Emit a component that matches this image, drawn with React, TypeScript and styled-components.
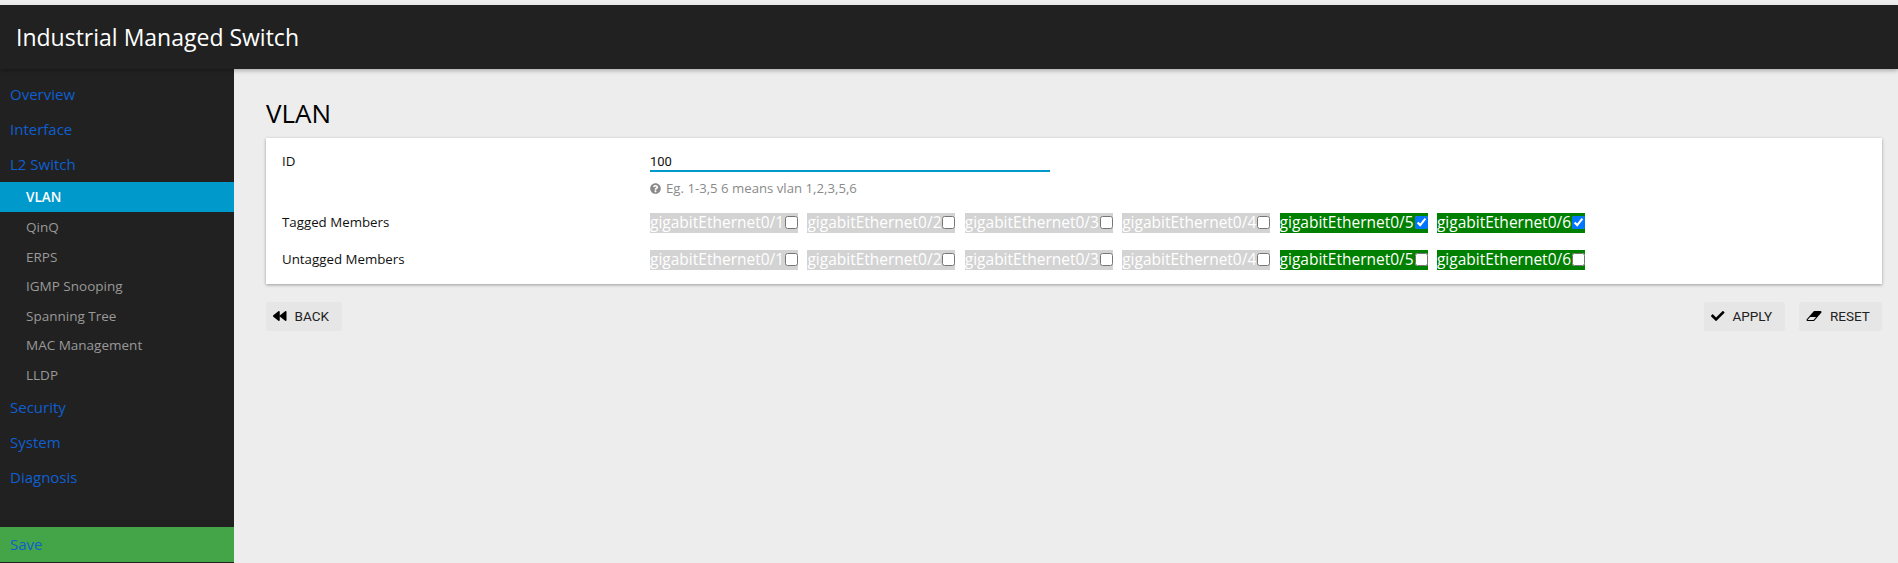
import React from "react";
import styled, { createGlobalStyle } from "styled-components";
import { FaBackward, FaCheck, FaQuestionCircle } from "react-icons/fa";

const UI = `"Open Sans", "Noto Sans", sans-serif`;
const ALT = `Roboto, "Liberation Sans", sans-serif`;

const Global = createGlobalStyle`
  html, body { margin: 0; padding: 0; background: #fff; }
  body { font-family: ${UI}; }
  * { box-sizing: border-box; }
`;

const Page = styled.div`
  width: 1898px;
  height: 563px;
  padding-top: 5px;
  display: flex;
  flex-direction: column;
  overflow: hidden;
  background: #ededed;
`;
const Header = styled.header`
  height: 64px;
  flex: none;
  background: #212121;
  color: #fff;
  display: flex;
  align-items: center;
  padding-left: 16px;
  font-size: 23px;
  font-weight: 500;
  letter-spacing: 0;
  box-shadow: 0 2px 4px rgba(0,0,0,.25);
  position: relative;
  z-index: 1;
`;
const Body = styled.div`
  flex: 1;
  display: flex;
  min-height: 0;
`;
const Sidebar = styled.nav`
  width: 234px;
  flex: none;
  background: #212121;
  display: flex;
  flex-direction: column;
  padding-top: 7.5px;
`;
const TopItem = styled.div`
  height: 35.3px;
  line-height: 34px;
  padding-left: 10px;
  font-size: 15px;
  color: #0f5fd0;
`;
const SubItem = styled.div<{ $active?: boolean }>`
  height: 29.6px;
  line-height: 30px;
  padding-left: 26px;
  font-size: 13.5px;
  color: ${(p) => (p.$active ? "#fff" : "#999")};
  background: ${(p) => (p.$active ? "#0099cc" : "transparent")};
  font-weight: ${(p) => (p.$active ? 600 : 400)};
`;
const Spacer = styled.div`flex: 1;`;
const SaveItem = styled(TopItem)`
  height: 35px;
  background: #43a547;
  margin-bottom: 1px;
`;
const Main = styled.main`
  flex: 1;
  padding: 29px 16px 0 32px;
  min-width: 0;
`;
const Title = styled.h2`
  margin: 0 0 7px;
  height: 33px;
  line-height: 30px;
  font-size: 26px;
  font-weight: 400;
  color: #000;
`;
const Card = styled.section`
  background: #fff;
  height: 146px;
  padding: 14px 16px 0;
  box-shadow: 0 1px 3px rgba(0,0,0,.35);
`;
const Row = styled.div<{ $h: number }>`
  display: flex;
  height: ${(p) => p.$h}px;
`;
const Label = styled.div`
  width: 368px;
  flex: none;
  font-size: 13.3px;
  line-height: 18px;
  color: #111;
`;
const Field = styled.div`
  width: 400px;
`;
const InputBox = styled.div`
  height: 20px;
  line-height: 19px;
  font-family: ${ALT};
  font-size: 13px;
  color: #111;
  border-bottom: 2px solid #0099cc;
`;
const Hint = styled.div`
  margin-top: 8px;
  display: flex;
  align-items: center;
  gap: 5px;
  font-size: 13.2px;
  color: #8a8a8a;
  line-height: 16px;
  svg { flex: none; }
`;
const Members = styled.div`
  display: flex;
  gap: 9.4px;
`;
const Chip = styled.label<{ $on?: boolean }>`
  width: 148px;
  height: 20px;
  display: flex;
  justify-content: space-between;
  background: ${(p) => (p.$on ? "#008000" : "#d3d3d3")};
  color: #fff;
  font-size: 15.5px;
  line-height: 19px;
  white-space: nowrap;
`;
const Check = styled.input`
  margin: 3px 0 0;
  width: 13px;
  height: 13px;
  flex: none;
`;
const Actions = styled.div`
  display: flex;
  justify-content: space-between;
  margin-top: 18px;
`;
const Group = styled.div`
  display: flex;
  gap: 14px;
`;
const Btn = styled.button<{ $w: number }>`
  width: ${(p) => p.$w}px;
  height: 29px;
  border: 0;
  border-radius: 2px;
  background: #e6e6e6;
  color: #222;
  font-family: ${ALT};
  font-size: 13.5px;
  display: flex;
  align-items: center;
  gap: 8px;
  padding: 0 0 2px 7px;
  svg { height: 14px; color: #000; flex: none; }
`;

const Eraser = () => (
  <svg width="16" viewBox="0 0 2048 1792" fill="currentColor" aria-hidden="true">
    <path d="M960 1408l336-384h-768l-336 384h768zm1013-1077q15 34 9.5 71.5t-30.5 65.5l-896 1024q-38 44-96 44h-768q-38 0-69.5-20.5t-47.5-54.5q-15-34-9.5-71.5t30.5-65.5l896-1024q38-44 96-44h768q38 0 70 20.5t47 54.5z" />
  </svg>
);

const ports = [1, 2, 3, 4, 5, 6];
const MemberRow = ({ tagged }: { tagged: boolean }) => (
  <Members>
    {ports.map((n) => (
      <Chip key={n} $on={n > 4}>
        gigabitEthernet0/{n}
        <Check type="checkbox" readOnly checked={tagged && n > 4} />
      </Chip>
    ))}
  </Members>
);

export default function App() {
  return (
    <Page>
      <Global />
      <Header>Industrial Managed Switch</Header>
      <Body>
        <Sidebar>
          <TopItem>Overview</TopItem>
          <TopItem>Interface</TopItem>
          <TopItem>L2 Switch</TopItem>
          <SubItem $active>VLAN</SubItem>
          <SubItem>QinQ</SubItem>
          <SubItem>ERPS</SubItem>
          <SubItem>IGMP Snooping</SubItem>
          <SubItem>Spanning Tree</SubItem>
          <SubItem>MAC Management</SubItem>
          <SubItem>LLDP</SubItem>
          <TopItem>Security</TopItem>
          <TopItem>System</TopItem>
          <TopItem>Diagnosis</TopItem>
          <Spacer />
          <SaveItem>Save</SaveItem>
        </Sidebar>
        <Main>
          <Title>VLAN</Title>
          <Card>
            <Row $h={61}>
              <Label>ID</Label>
              <Field>
                <InputBox>100</InputBox>
                <Hint>
                  <FaQuestionCircle size={11} />
                  Eg. 1-3,5 6 means vlan 1,2,3,5,6
                </Hint>
              </Field>
            </Row>
            <Row $h={37}>
              <Label>Tagged Members</Label>
              <MemberRow tagged />
            </Row>
            <Row $h={20}>
              <Label>Untagged Members</Label>
              <MemberRow tagged={false} />
            </Row>
          </Card>
          <Actions>
            <Btn $w={76}><FaBackward />BACK</Btn>
            <Group>
              <Btn $w={81}><FaCheck />APPLY</Btn>
              <Btn $w={83}><Eraser />RESET</Btn>
            </Group>
          </Actions>
        </Main>
      </Body>
    </Page>
  );
}
